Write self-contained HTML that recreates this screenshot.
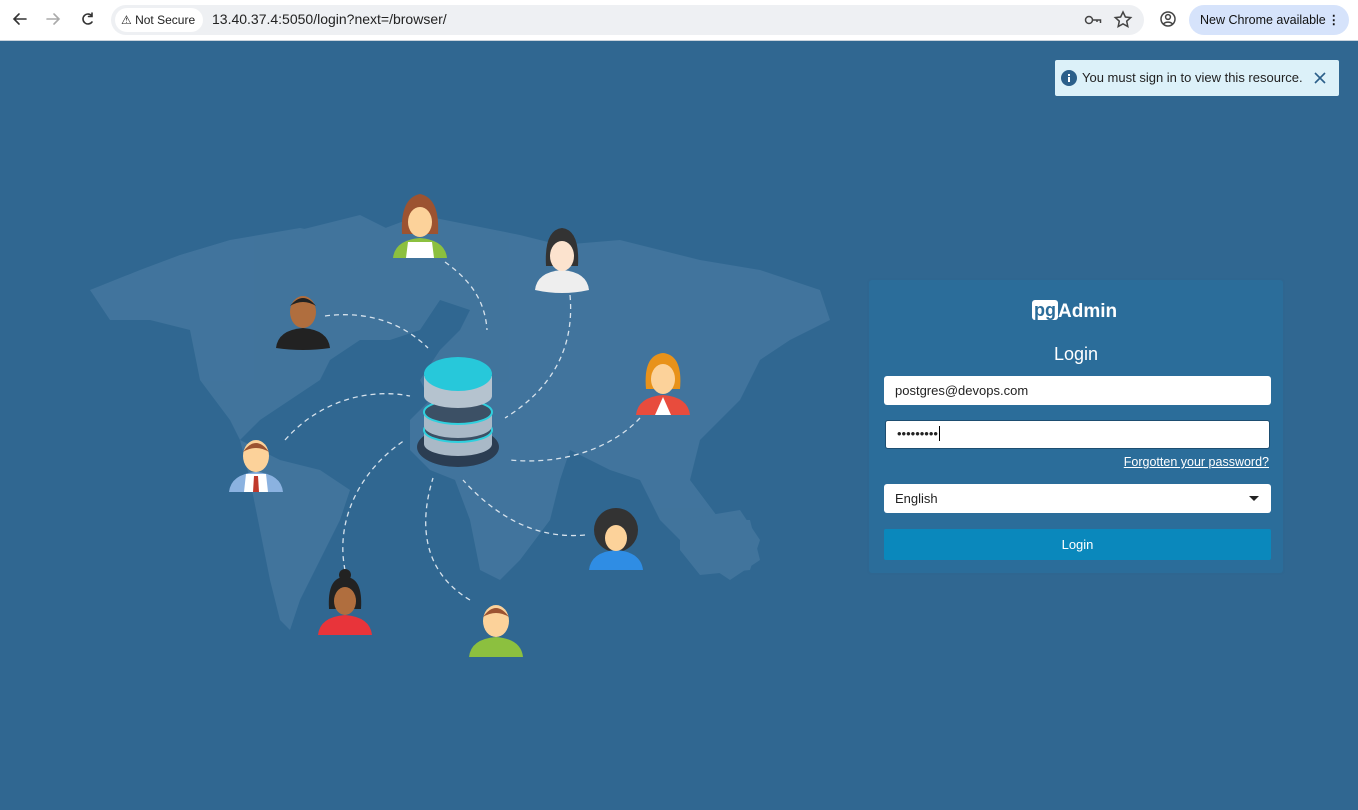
<!DOCTYPE html>
<html><head><meta charset="utf-8"><style>
*{margin:0;padding:0;box-sizing:border-box}
body{width:1358px;height:810px;overflow:hidden;font-family:"Liberation Sans",sans-serif;background:#306791;position:relative}
.bar{position:absolute;left:0;top:0;width:1358px;height:41px;background:#fff;border-bottom:1px solid #c9d3dc}
.omni{position:absolute;left:111px;top:5px;width:1033px;height:30px;border-radius:15px;background:#eef0f3}
.ns{position:absolute;left:115px;top:8px;height:24px;padding:0 8px 0 6px;border-radius:12px;background:#fff;font-size:12px;line-height:24px;color:#222}
.url{position:absolute;left:212px;top:11px;font-size:14px;color:#222}
.chip{position:absolute;left:1189px;top:5px;width:160px;height:30px;border-radius:15px;background:#d6e3fb;font-size:12.5px;line-height:30px;padding-left:11px;color:#111}
.toast{position:absolute;left:1055px;top:60px;width:284px;height:36px;background:#dcf1f9;border-radius:2px;font-size:13px;line-height:36px;color:#222;padding-left:27px}
.card{position:absolute;left:867px;top:278px;width:418px;height:297px;background:#2b6d9a;border-radius:5px;border:2px solid #2f6690}
.inp{position:absolute;left:15px;width:387px;height:29px;background:#fff;border-radius:3px;font-size:13px;line-height:29px;padding-left:11px;color:#222}
</style></head><body>
<div class="bar">
<svg width="120" height="41" style="position:absolute;left:0;top:0" fill="none" stroke-width="1.6" stroke-linecap="round">
<path d="M26 19H14M19 14l-5 5 5 5" stroke="#333"/>
<path d="M47 19h12M54 14l5 5-5 5" stroke="#aaa"/>
<path d="M92 16a5 5 0 1 0 0 6M92 13v3.5h-3.5" stroke="#333"/>
</svg>
<div class="omni"></div>
<div class="ns">⚠ Not Secure</div>
<div class="url">13.40.37.4:5050/login?next=/browser/</div>
<svg width="100" height="41" style="position:absolute;left:1080px;top:0" fill="none" stroke="#444" stroke-width="1.5">
<circle cx="9" cy="20" r="3.5"/><path d="M12.5 20h8v3M17 20v2"/>
<path d="M43 12l2.4 5 5.3.6-4 3.6 1.1 5.3-4.8-2.7-4.8 2.7 1.1-5.3-4-3.6 5.3-.6z"/>
<circle cx="88" cy="19" r="7"/><circle cx="88" cy="17" r="2.4"/><path d="M83.5 24c2-2.5 7-2.5 9 0"/>
</svg>
<div class="chip">New Chrome available<span style="position:absolute;right:9px;top:0;font-weight:bold">⋮</span></div>
</div>

<svg width="860" height="769" style="position:absolute;left:0;top:41px" viewBox="0 41 860 769">
<g fill="#44779f" opacity="0.85">
<path d="M90 290 L140 270 L180 255 L230 240 L300 228 L350 238 L380 230 L420 215 L470 225 L520 235 L560 245 L620 240 L700 260 L760 270 L820 290 L830 320 L790 340 L760 360 L740 400 L720 420 L700 440 L690 480 L720 520 L750 520 L760 560 L730 580 L700 560 L680 540 L660 520 L640 480 L610 470 L590 460 L570 450 L560 480 L550 520 L520 560 L500 580 L480 570 L470 520 L455 480 L430 470 L410 450 L410 420 L430 400 L420 380 L440 350 L460 330 L470 310 L440 300 L420 330 L390 340 L360 340 L330 360 L320 380 L290 400 L260 420 L240 440 L230 420 L200 380 L190 330 L150 320 L110 320 Z"/>
<path d="M240 440 L280 460 L320 470 L350 490 L340 520 L320 560 L300 600 L290 630 L280 620 L270 580 L260 530 L250 480 Z"/>
<path d="M300 230 L360 215 L390 230 L380 260 L350 270 L320 300 L300 280 Z"/>
<path d="M680 520 L740 510 L760 540 L750 570 L700 575 L680 550 Z"/>
</g>
<g fill="none" stroke="#d6e2ec" stroke-width="1.3" stroke-dasharray="5 4">
<path d="M445 262 C470 280 485 300 487 330"/>
<path d="M570 295 C575 350 550 390 505 418"/>
<path d="M325 316 C370 310 405 325 428 348"/>
<path d="M285 440 C320 400 370 388 410 396"/>
<path d="M640 418 C610 450 560 465 510 460"/>
<path d="M345 570 C335 520 360 470 405 440"/>
<path d="M470 600 C420 570 420 520 433 478"/>
<path d="M585 535 C530 540 490 510 463 480"/>
</g>
<g>
<ellipse cx="458" cy="447" rx="41" ry="20" fill="#2b3d52"/>
<path d="M424 430v14a34 12 0 0 0 68 0v-14z" fill="#a9b9c7"/>
<ellipse cx="458" cy="430" rx="34" ry="12" fill="#3c5065" stroke="#2fd0de" stroke-width="2"/>
<path d="M424 412v14a34 12 0 0 0 68 0v-14z" fill="#a9b9c7"/>
<ellipse cx="458" cy="412" rx="34" ry="12" fill="#3c5065" stroke="#2fd0de" stroke-width="2"/>
<path d="M424 376v20a34 12 0 0 0 68 0v-20z" fill="#b5c3cf"/>
<ellipse cx="458" cy="374" rx="34" ry="17" fill="#27c8da"/>
</g>
<g transform="translate(420,228)"><path d="M-18 6 Q-20 -30 0 -34 Q20 -30 18 6 Z" fill="#9c5331"/><path d="M-27 30 Q-25 12 0 10 Q25 12 27 30 Z" fill="#8cc03f"/><path d="M-14 30 L-12 14 L12 14 L14 30Z" fill="#fff"/><ellipse cx="0" cy="-6" rx="12" ry="15" fill="#fcd29a"/></g>
<g transform="translate(562,262)"><path d="M-16 4 Q-18 -32 0 -34 Q18 -32 16 4 Z" fill="#333"/><path d="M-27 28 Q-25 10 0 8 Q25 10 27 28 Q0 34 -27 28Z" fill="#eee"/><ellipse cx="0" cy="-6" rx="12" ry="15" fill="#fce3ce"/></g>
<g transform="translate(303,318)"><path d="M-27 30 Q-25 12 0 10 Q25 12 27 30 Q0 34 -27 30Z" fill="#222"/><ellipse cx="0" cy="-6" rx="13" ry="16" fill="#b06e3e"/><path d="M-13 -12 Q0 -28 13 -12 Q0 -20 -13 -12Z" fill="#222"/></g>
<g transform="translate(663,385)"><path d="M-17 4 Q-20 -30 0 -32 Q20 -30 17 4 Z" fill="#e8921a"/><path d="M-27 30 Q-25 12 0 10 Q25 12 27 30 Z" fill="#e84c3d"/><path d="M-8 30 L0 12 L8 30Z" fill="#fff"/><ellipse cx="0" cy="-6" rx="12" ry="15" fill="#fcd29a"/></g>
<g transform="translate(256,462)"><path d="M-27 30 Q-25 12 0 10 Q25 12 27 30 Z" fill="#8bb2e0"/><path d="M-12 30 L-10 12 L10 12 L12 30Z" fill="#fff"/><path d="M-2 14h4l1 16h-6z" fill="#c0392b"/><ellipse cx="0" cy="-6" rx="13" ry="16" fill="#fcd29a"/><path d="M-13 -10 Q0 -28 13 -10 Q0 -18 -13 -10Z" fill="#9c5331"/></g>
<g transform="translate(616,540)"><circle cx="0" cy="-10" r="22" fill="#333"/><path d="M-27 30 Q-25 12 0 10 Q25 12 27 30 Z" fill="#2f8de4"/><ellipse cx="0" cy="-2" rx="11" ry="13" fill="#fcd29a"/></g>
<g transform="translate(345,605)"><circle cx="0" cy="-30" r="6" fill="#222"/><path d="M-16 4 Q-18 -28 0 -28 Q18 -28 16 4Z" fill="#222"/><path d="M-27 30 Q-25 12 0 10 Q25 12 27 30 Z" fill="#e8343a"/><ellipse cx="0" cy="-4" rx="11" ry="14" fill="#b06e3e"/></g>
<g transform="translate(496,627)"><path d="M-27 30 Q-25 12 0 10 Q25 12 27 30 Z" fill="#8cc03f"/><ellipse cx="0" cy="-6" rx="13" ry="16" fill="#fcd29a"/><path d="M-13 -10 Q0 -28 13 -10 Q0 -18 -13 -10Z" fill="#9c5331"/></g>
</svg>

<div class="toast"><svg width="16" height="16" style="position:absolute;left:6px;top:10px"><circle cx="8" cy="8" r="8" fill="#2b5f8a"/><rect x="7" y="7" width="2" height="5" fill="#fff"/><rect x="7" y="4" width="2" height="2" fill="#fff"/></svg>You must sign in to view this resource.<svg width="12" height="12" style="position:absolute;right:13px;top:12px" stroke="#2b5f8a" stroke-width="1.6"><path d="M1 1l10 10M11 1L1 11"/></svg></div>

<div class="card">
<div style="position:absolute;left:163px;top:20px;height:24px;font-weight:bold;font-size:19px;color:#fff;line-height:24px"><span style="display:inline-block;background:#fff;color:#2b6d9a;padding:0 2px;border-radius:3px;font-size:18px;line-height:20px;vertical-align:1px">pg</span>Admin</div>
<div style="position:absolute;left:0;width:100%;top:64px;text-align:center;font-size:18px;color:#fff">Login</div>
<div class="inp" style="top:96px">postgres@devops.com</div>
<div class="inp" style="top:140px;border:1px solid #1d4d70;left:16px;width:385px;line-height:26px">•••••••••<span style="border-left:1px solid #000;margin-left:1px"></span></div>
<div style="position:absolute;right:14px;top:175px;font-size:12.5px;color:#fff;text-decoration:underline">Forgotten your password?</div>
<div class="inp" style="top:204px">English<span style="position:absolute;right:12px;top:12px;border:5px solid transparent;border-top-color:#222;border-bottom:0"></span></div>
<div style="position:absolute;left:15px;top:249px;width:387px;height:31px;background:#0a88bc;border-radius:2px;text-align:center;line-height:31px;color:#fff;font-size:13px">Login</div>
</div>
</body></html>
